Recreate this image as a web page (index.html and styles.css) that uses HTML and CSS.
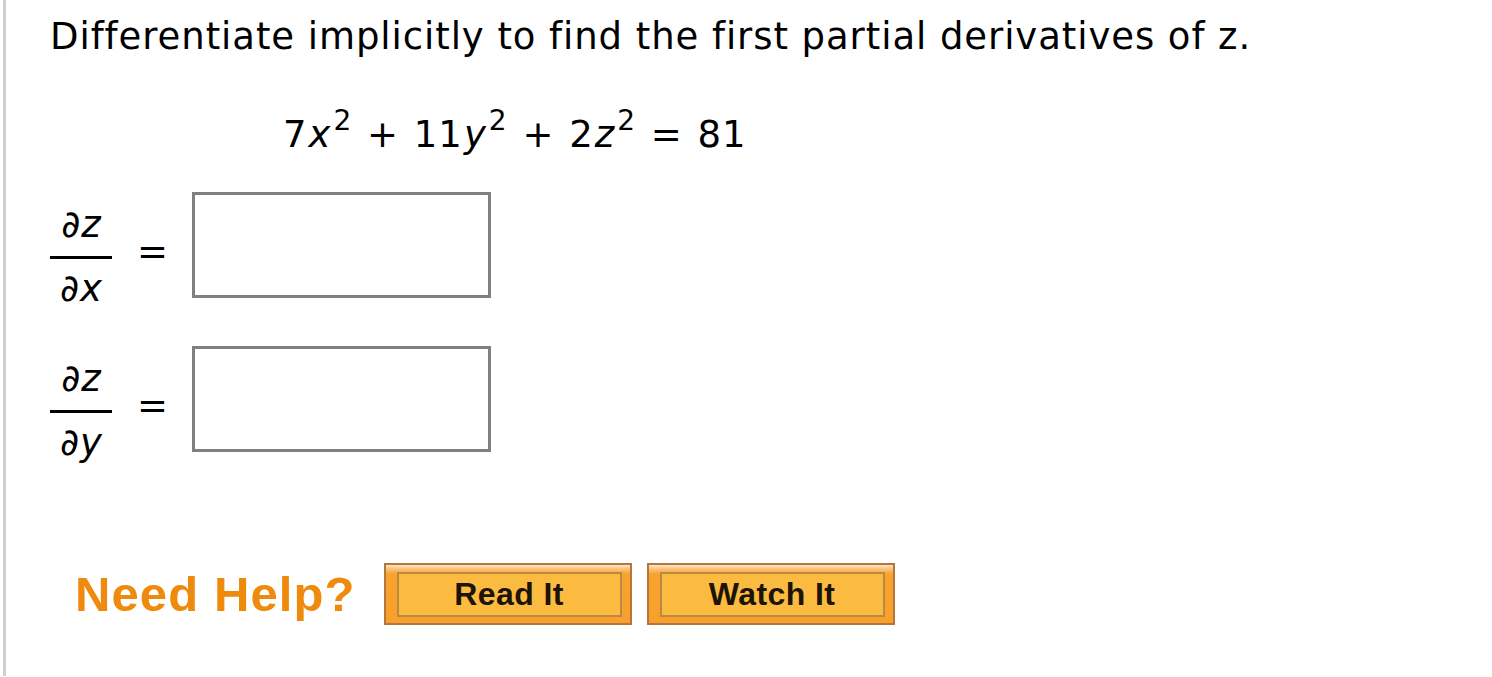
FILE: index.html
```html
<!DOCTYPE html>
<html>
<head>
<meta charset="utf-8">
<link rel="stylesheet" href="styles.css">
</head>
<body>
<div class="page">
  <p class="question">Differentiate implicitly to find the first partial derivatives of <i class="var-up">z</i>.</p>
  <div class="equation">7<i>x</i><sup>2</sup> + 11<i>y</i><sup>2</sup> + 2<i>z</i><sup>2</sup> = 81</div>
  <div class="answer-row">
    <div class="frac"><span class="num">∂<i>z</i></span><span class="bar"></span><span class="den">∂<i>x</i></span></div>
    <span class="eq">=</span>
    <div class="box"></div>
  </div>
  <div class="answer-row second">
    <div class="frac"><span class="num">∂<i>z</i></span><span class="bar"></span><span class="den">∂<i>y</i></span></div>
    <span class="eq">=</span>
    <div class="box"></div>
  </div>
  <div class="help">
    <span class="need">Need Help?</span>
    <div class="btn"><div class="btn-inner">Read It</div></div>
    <div class="btn"><div class="btn-inner">Watch It</div></div>
  </div>
</div>
</body>
</html>
```
FILE: styles.css
```css
html, body { margin: 0; padding: 0; background: #fff; }
.page {
  margin-left: 3px;
  border-left: 3px solid #cfcfcf;
  height: 676px;
  padding-left: 44px;
  font-family: "DejaVu Sans", Verdana, sans-serif;
  font-variant-ligatures: none;
  color: #000;
  box-sizing: border-box;
}
.question {
  margin: 0;
  padding-top: 15px;
  font-size: 37px;
  line-height: 44px;
  letter-spacing: 0.93px;
}
.question .var-up { font-style: normal; }
.equation {
  padding-left: 233px;
  margin-top: 54px;
  font-size: 37px;
  line-height: 44px;
  height: 44px;
  letter-spacing: 1px;
  word-spacing: 2px;
}
.equation i { margin-left: 1px; }
.equation sup { font-size: 28px; line-height: 0; vertical-align: 17px; margin-left: 2px; }
.answer-row {
  display: flex;
  align-items: flex-start;
  margin-top: 35px;
}
.answer-row.second { margin-top: 35px; }
.frac {
  display: flex;
  flex-direction: column;
  align-items: center;
  width: 62px;
  margin-top: 11px;
  font-size: 37px;
  line-height: 44px;
}
.frac i { margin-left: 1px; }
.frac .bar { width: 62px; height: 3px; background: #000; margin: 9px 0 8px; }
.eq { font-size: 37px; margin-left: 25px; margin-top: 38px; line-height: 44px; }
.box {
  margin-left: 24px;
  width: 299px;
  height: 106px;
  border: 3px solid #808080;
  box-sizing: border-box;
}
.help {
  display: flex;
  align-items: center;
  margin-top: 98px;
}
.need {
  font-family: "Liberation Sans", Arial, sans-serif;
  font-weight: bold;
  color: #ee8a0c;
  font-size: 49px;
  letter-spacing: 1.1px;
  margin-left: 25px;
  margin-right: 28px;
}
.btn {
  width: 248px;
  height: 62px;
  box-sizing: border-box;
  border: 2px solid #b3763c;
  background: linear-gradient(#fde6c8 0, #fbc27a 4px, #f9a22e 9px, #f9a02c 100%);
  padding: 7px 8px 6px 11px;
  margin-right: 15px;
}
.btn-inner {
  height: 100%;
  box-sizing: border-box;
  border: 2px solid #b98a44;
  background: #fbba40;
  display: flex;
  align-items: center;
  justify-content: center;
  font-family: "Liberation Sans", Arial, sans-serif;
  font-weight: bold;
  font-size: 32px;
  letter-spacing: 0.4px;
  color: #1c1406;
}
```
